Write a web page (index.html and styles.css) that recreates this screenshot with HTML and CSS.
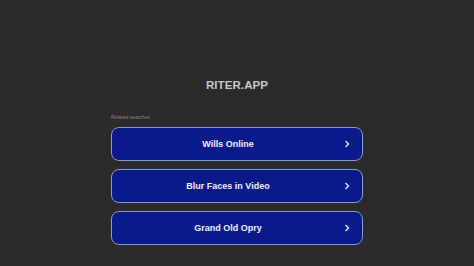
FILE: index.html
```html
<!DOCTYPE html>
<html>
<head>
<meta charset="utf-8">
<link rel="stylesheet" href="styles.css">
</head>
<body>
<div class="page">
  <h1 class="title">RITER.APP</h1>
  <div class="related">Related searches</div>
  <div class="list">
    <a class="item" href="#"><span class="label">Wills Online</span><svg class="chev" width="6" height="8" viewBox="0 0 6 8"><path d="M1.5 1 L4.5 4 L1.5 7" fill="none" stroke="#e6e8f5" stroke-width="1.4"/></svg></a>
    <a class="item" href="#"><span class="label">Blur Faces in Video</span><svg class="chev" width="6" height="8" viewBox="0 0 6 8"><path d="M1.5 1 L4.5 4 L1.5 7" fill="none" stroke="#e6e8f5" stroke-width="1.4"/></svg></a>
    <a class="item" href="#"><span class="label">Grand Old Opry</span><svg class="chev" width="6" height="8" viewBox="0 0 6 8"><path d="M1.5 1 L4.5 4 L1.5 7" fill="none" stroke="#e6e8f5" stroke-width="1.4"/></svg></a>
  </div>
</div>
</body>
</html>
```
FILE: styles.css
```css
html, body {
  margin: 0;
  padding: 0;
  background: #2b2b2b;
  height: 100%;
}
body {
  font-family: "Liberation Sans", Arial, sans-serif;
}
.page {
  width: 252px;
  margin: 0 auto;
  padding-top: 78px;
  display: flex;
  flex-direction: column;
}
.title {
  margin: 0;
  font-size: 11.5px;
  line-height: 14px;
  font-weight: bold;
  color: #c9c9c9;
  text-align: center;
  letter-spacing: 0.1px;
}
.related {
  margin-top: 22px;
  font-size: 5px;
  line-height: 6px;
  color: #8a8a8a;
}
.list {
  margin-top: 7px;
  display: flex;
  flex-direction: column;
  gap: 8px;
}
.item {
  box-sizing: border-box;
  height: 34px;
  display: flex;
  align-items: center;
  background: #0a1a8a;
  border: 1px solid #8e9bd4;
  border-radius: 8px;
  text-decoration: none;
  padding-right: 12px;
}
.label {
  flex: 1;
  text-align: center;
  color: #eef0fa;
  font-size: 9px;
  font-weight: bold;
}
.chev {
  display: block;
}
```
